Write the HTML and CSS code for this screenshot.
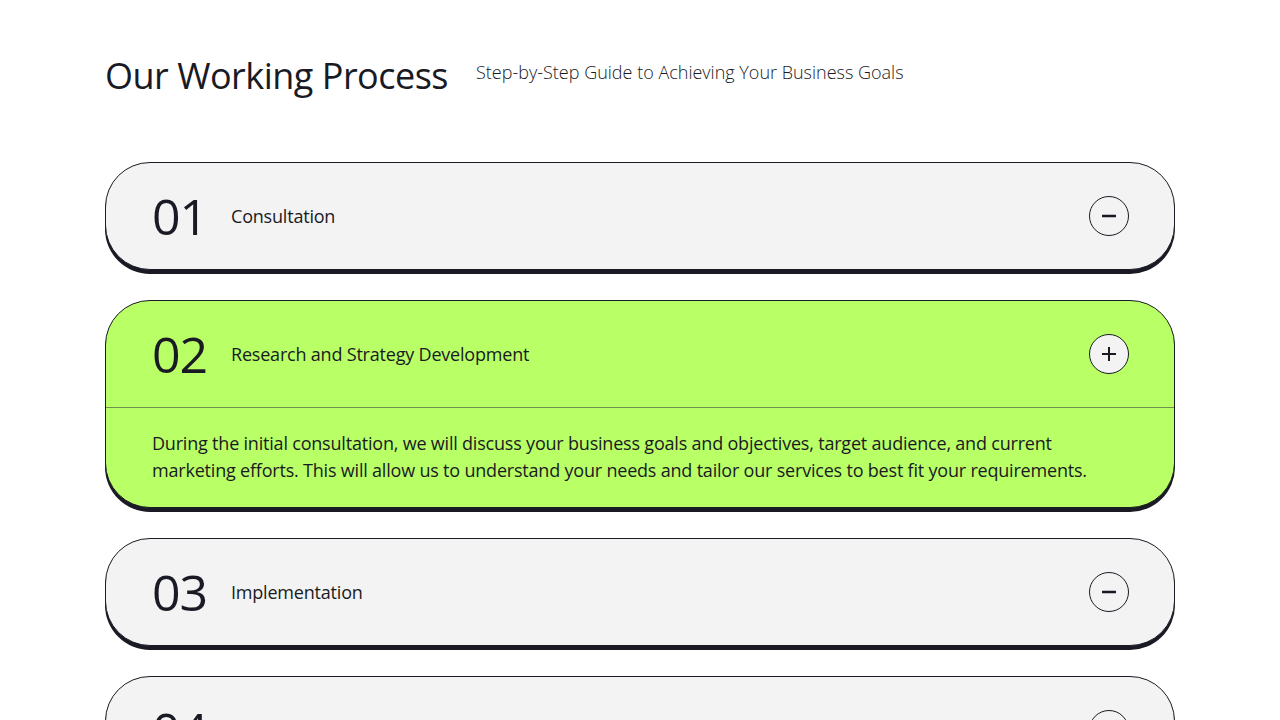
FILE: index.html
```html
<!DOCTYPE html>
<html lang="en">
<head>
    <meta charset="UTF-8">
    <meta name="viewport" content="width=device-width, initial-scale=1">
    <title>Our Working Process</title>
    <link rel="stylesheet" href="styles.css">
</head>
<body>
<section class="process">
    <div class="heading">
        <h2>Our Working Process</h2>
        <p>Step-by-Step Guide to Achieving Your Business Goals</p>
    </div>

    <div class="steps">
        <div class="step">
            <div class="step-head">
                <span class="num">01</span>
                <span class="name">Consultation</span>
                <span class="toggle">
                    <svg width="40" height="40" viewBox="0 0 40 40"><circle cx="20" cy="20" r="19.5" fill="#f3f3f3" stroke="#191a23"/><path d="M13 20h14" stroke="#191a23" stroke-width="2.4"/></svg>
                </span>
            </div>
        </div>

        <div class="step open">
            <div class="step-head">
                <span class="num">02</span>
                <span class="name">Research and Strategy Development</span>
                <span class="toggle">
                    <svg width="40" height="40" viewBox="0 0 40 40"><circle cx="20" cy="20" r="19.5" fill="#f3f3f3" stroke="#191a23"/><path d="M13 20h14M20 13v14" stroke="#191a23" stroke-width="2"/></svg>
                </span>
            </div>
            <div class="step-body">
                <p>During the initial consultation, we will discuss your business goals and objectives, target audience, and current marketing efforts. This will allow us to understand your needs and tailor our services to best fit your requirements.</p>
            </div>
        </div>

        <div class="step">
            <div class="step-head">
                <span class="num">03</span>
                <span class="name">Implementation</span>
                <span class="toggle">
                    <svg width="40" height="40" viewBox="0 0 40 40"><circle cx="20" cy="20" r="19.5" fill="#f3f3f3" stroke="#191a23"/><path d="M13 20h14" stroke="#191a23" stroke-width="2.4"/></svg>
                </span>
            </div>
        </div>

        <div class="step">
            <div class="step-head">
                <span class="num">04</span>
                <span class="name">Monitoring and Optimization</span>
                <span class="toggle">
                    <svg width="40" height="40" viewBox="0 0 40 40"><circle cx="20" cy="20" r="19.5" fill="#f3f3f3" stroke="#191a23"/><path d="M13 20h14" stroke="#191a23" stroke-width="2.4"/></svg>
                </span>
            </div>
        </div>
    </div>
</section>
</body>
</html>
```

FILE: styles.css
```css
body, html {
    margin: 0;
    padding: 0;
    background-color: #ffffff;
    color: #191a23;
    font-family: "Open Sans", "Noto Sans", sans-serif;
}

.process {
    padding: 52px 105px 0 105px;
}

.heading {
    display: flex;
    align-items: flex-start;
    gap: 28px;
    margin-bottom: 62px;
}

.heading h2 {
    margin: 0;
    font-size: 36px;
    font-weight: 400;
    line-height: 48px;
    letter-spacing: -0.5px;
}

.heading p {
    margin: 8px 0 0 0;
    font-size: 18px;
    font-weight: 300;
    line-height: 24px;
    letter-spacing: 0;
}

.steps {
    display: flex;
    flex-direction: column;
    gap: 30px;
}

.step {
    background-color: #f3f3f3;
    border: 1px solid #191a23;
    border-radius: 45px;
    box-shadow: 0 4px 0 #191a23;
    overflow: hidden;
}

.step.open {
    background-color: #b9ff66;
}

.step-head {
    display: flex;
    align-items: center;
    height: 106px;
    padding: 0 45px 0 46px;
}

.num {
    font-size: 50px;
    font-weight: 400;
    line-height: 60px;
    letter-spacing: -1px;
    width: 79px;
}

.name {
    flex: 1;
    font-size: 18px;
    font-weight: 400;
    letter-spacing: -0.2px;
}

.toggle {
    display: flex;
    width: 40px;
    height: 40px;
}

.step-body {
    border-top: 1px solid #6f8f4f;
    margin: 0;
    padding: 22px 46px 23px 46px;
}

.step-body p {
    margin: 0;
    max-width: 940px;
    font-size: 18px;
    line-height: 27px;
    letter-spacing: -0.2px;
}
```
